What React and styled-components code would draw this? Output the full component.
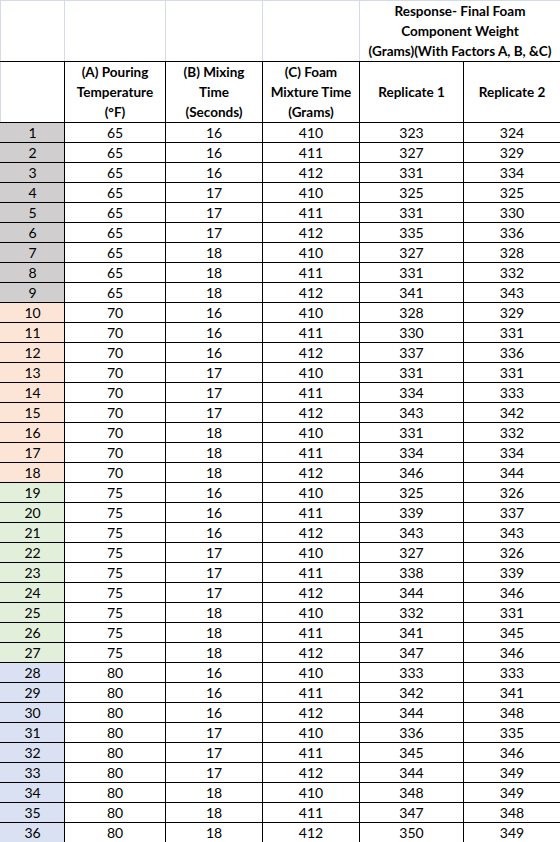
import React from "react";
import styled, { createGlobalStyle } from "styled-components";

const GlobalStyle = createGlobalStyle`
  html, body {
    margin: 0;
    padding: 0;
    background: #ffffff;
  }
  body {
    font-family: Lato, "Open Sans", "Liberation Sans", sans-serif;
    color: #000;
  }
`;

const R1 = [
  323, 327, 331, 325, 331, 335, 327, 331, 341,
  328, 330, 337, 331, 334, 343, 331, 334, 346,
  325, 339, 343, 327, 338, 344, 332, 341, 347,
  333, 342, 344, 336, 345, 344, 348, 347, 350,
];
const R2 = [
  324, 329, 334, 325, 330, 336, 328, 332, 343,
  329, 331, 336, 331, 333, 342, 332, 334, 344,
  326, 337, 343, 326, 339, 346, 331, 345, 346,
  333, 341, 348, 335, 346, 349, 349, 348, 349,
];

const TONES = ["#d0cece", "#fce4d6", "#e2efda", "#d9e1f2"];

const rows = [];
[65, 70, 75, 80].forEach((a, ai) => {
  [16, 17, 18].forEach((b) => {
    [410, 411, 412].forEach((c) => {
      const i = rows.length;
      rows.push({ n: i + 1, a, b, c, r1: R1[i], r2: R2[i], tone: TONES[ai] });
    });
  });
});

const App = () => {
  return (
    <>
      <GlobalStyle />
      <Sheet>
        <colgroup>
          <col style={{ width: 64 }} />
          <col style={{ width: 101 }} />
          <col style={{ width: 97 }} />
          <col style={{ width: 97 }} />
          <col style={{ width: 104 }} />
          <col style={{ width: 97 }} />
        </colgroup>
        <tbody>
          <TopRow>
            <GridCell />
            <GridCell />
            <GridCell />
            <GridCell />
            <HeadCell colSpan={2} $top>
              Response- Final Foam
              <br />
              Component Weight
              <br />
              (Grams)(With Factors A, B, &amp;C)
            </HeadCell>
          </TopRow>
          <TopRow>
            <HeadCell $noLeft />
            <HeadCell>
              (A) Pouring
              <br />
              Temperature
              <br />
              (°F)
            </HeadCell>
            <HeadCell>
              (B) Mixing
              <br />
              Time
              <br />
              (Seconds)
            </HeadCell>
            <HeadCell>
              (C) Foam
              <br />
              Mixture Time
              <br />
              (Grams)
            </HeadCell>
            <HeadCell>Replicate 1</HeadCell>
            <HeadCell>Replicate 2</HeadCell>
          </TopRow>
          {rows.map((r) => (
            <DataRow key={r.n}>
              <LabelCell $tone={r.tone}>{r.n}</LabelCell>
              <Cell>{r.a}</Cell>
              <Cell>{r.b}</Cell>
              <Cell>{r.c}</Cell>
              <Cell>{r.r1}</Cell>
              <Cell>{r.r2}</Cell>
            </DataRow>
          ))}
        </tbody>
      </Sheet>
    </>
  );
};

export default App;

const Sheet = styled.table`
  width: 560px;
  table-layout: fixed;
  border-collapse: collapse;
  border-spacing: 0;
  font-size: 14px;
`;

const TopRow = styled.tr`
  height: 60px;
`;

const DataRow = styled.tr`
  height: 20px;
`;

const GridCell = styled.td`
  padding: 0;
  border-top: 1px solid #d4dae6;
  border-left: 1px solid #d4dae6;
  border-right: 1px solid #d4dae6;
  border-bottom: 1px solid #000;
`;

const HeadCell = styled.td`
  padding: 0;
  text-align: center;
  vertical-align: middle;
  font-size: 13.5px;
  font-weight: 700;
  line-height: 20px;
  border: 1px solid #000;
  border-top-color: ${(p) => (p.$top ? "#d4dae6" : "#000")};
  border-left-color: ${(p) => (p.$noLeft ? "#d4dae6" : "#000")};
  white-space: nowrap;
`;

const Cell = styled.td`
  padding: 0;
  text-align: center;
  vertical-align: middle;
  line-height: 18px;
  border: 1px solid #000;
`;

const LabelCell = styled(Cell)`
  background: ${(p) => p.$tone};
  border-left-color: ${(p) => p.$tone};
`;
